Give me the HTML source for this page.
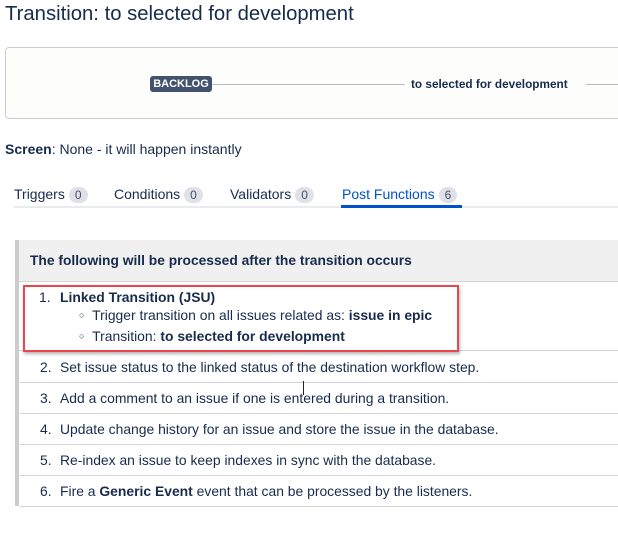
<!DOCTYPE html>
<html><head><style>
body{margin:0;width:618px;height:536px;background:#fff;font-family:"Liberation Sans",sans-serif;color:#172b4d;position:relative;overflow:hidden}
.a{position:absolute;white-space:nowrap}
.row{position:absolute;left:20px;width:600px;height:31px;border-bottom:1px solid #d4d4d4;font-size:13.9px;line-height:32px}
.n{position:absolute;left:20px}
.t{position:absolute;left:40px}
.tab{font-size:14px;top:186px}
.b{display:inline-block;background:#dfe1e6;border-radius:8px;padding:0 6px;font-size:12px;line-height:16px;margin-left:4px;color:#42526e}
</style></head><body>
<div class="a" style="left:5px;top:1px;font-size:20.3px;line-height:26px">Transition: to selected for development</div>
<div class="a" style="left:5px;top:47px;width:640px;height:70px;border:1px solid #ccc;border-radius:4px;background:#fdfdfb"></div>
<div class="a" style="left:150px;top:76px;width:62px;height:16px;background:#42526e;border-radius:3px;color:#fff;font-size:11px;font-weight:bold;line-height:16px;text-align:center">BACKLOG</div>
<div class="a" style="left:212px;top:84px;width:193px;height:1px;background:#bbb"></div>
<div class="a" style="left:411px;top:76px;font-size:11.8px;font-weight:bold;line-height:17px">to selected for development</div>
<div class="a" style="left:586px;top:84px;width:40px;height:1px;background:#bbb"></div>
<div class="a" style="left:5px;top:141px;font-size:14px"><b>Screen</b>: None - it will happen instantly</div>
<div class="a tab" style="left:14px">Triggers<span class="b">0</span></div>
<div class="a tab" style="left:114px">Conditions<span class="b">0</span></div>
<div class="a tab" style="left:230px">Validators<span class="b">0</span></div>
<div class="a tab" style="left:342px;color:#0052cc">Post Functions<span class="b">6</span></div>
<div class="a" style="left:13px;top:206px;width:610px;height:2px;background:#e9ebee"></div>
<div class="a" style="left:341px;top:205px;width:121px;height:3px;background:#0052cc"></div>
<div class="a" style="left:15px;top:240px;width:4px;height:266px;background:#ccc"></div>
<div class="a" style="left:19px;top:240px;width:600px;height:41px;background:#f0f0f0;border-bottom:1px solid #d4d4d4;font-size:13.8px;font-weight:bold;line-height:42px"><span style="margin-left:11px">The following will be processed after the transition occurs</span></div>
<div class="a" style="left:19px;top:282px;width:600px;height:68px;border-bottom:1px solid #d4d4d4"></div>
<div class="a" style="left:23px;top:285px;width:432px;height:63px;border:2px solid #e8474d;box-shadow:1px 2px 3px rgba(0,0,0,.3)"></div>
<div class="a" style="left:39px;top:289px;font-size:13.9px">1.</div>
<div class="a" style="left:60px;top:289px;font-size:13.9px;font-weight:bold">Linked Transition (JSU)</div>
<div class="a" style="left:79px;top:307px;font-size:13.9px"><span style="font-size:9px;vertical-align:2px">○</span>&nbsp;&nbsp;Trigger transition on all issues related as: <b>issue in epic</b></div>
<div class="a" style="left:79px;top:328px;font-size:13.9px"><span style="font-size:9px;vertical-align:2px">○</span>&nbsp;&nbsp;Transition: <b>to selected for development</b></div>
<div class="row" style="top:351px"><span class="n">2.</span><span class="t">Set issue status to the linked status of the destination workflow step.</span></div>
<div class="row" style="top:382px"><span class="n">3.</span><span class="t">Add a comment to an issue if one is entered during a transition.</span></div>
<div class="row" style="top:413px"><span class="n">4.</span><span class="t">Update change history for an issue and store the issue in the database.</span></div>
<div class="row" style="top:444px"><span class="n">5.</span><span class="t">Re-index an issue to keep indexes in sync with the database.</span></div>
<div class="row" style="top:475px"><span class="n">6.</span><span class="t">Fire a <b>Generic Event</b> event that can be processed by the listeners.</span></div>
<div class="a" style="left:303px;top:381px;width:1px;height:14px;background:#222"></div>
</body></html>
